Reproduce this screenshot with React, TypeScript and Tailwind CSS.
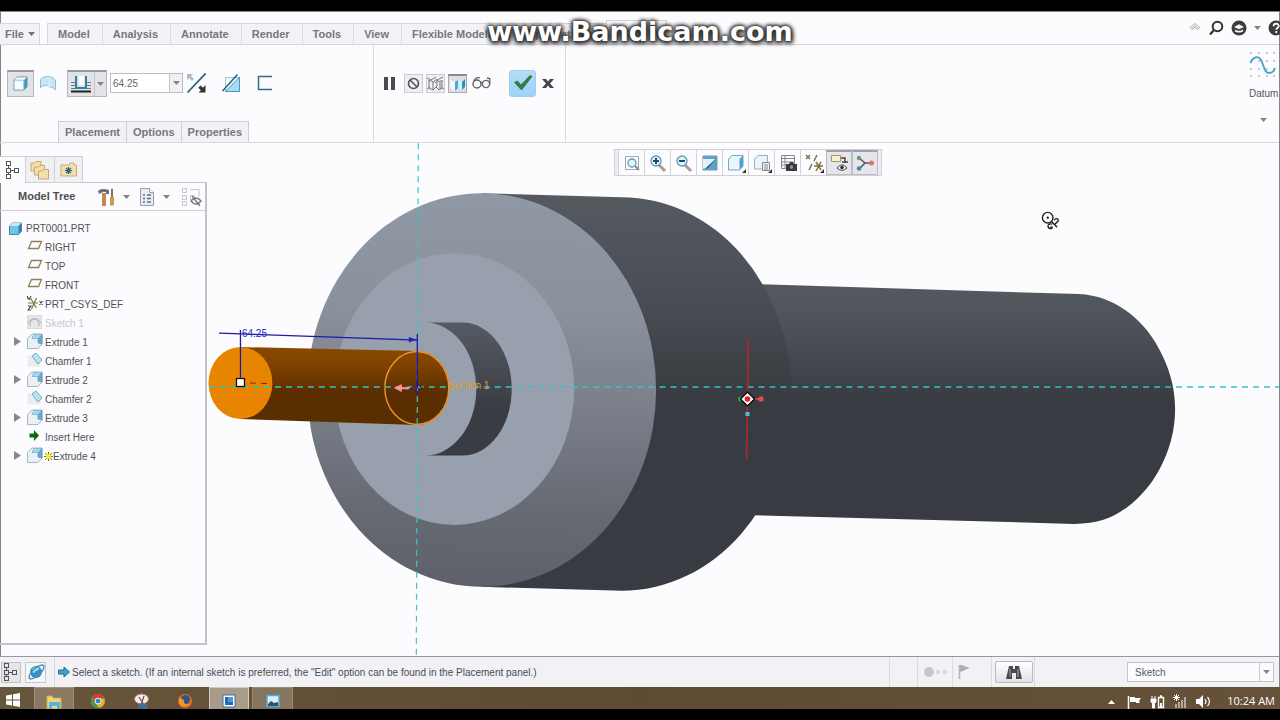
import type { ReactNode } from "react";

const ribbonTabs = ["Model", "Analysis", "Annotate", "Render", "Tools", "View", "Flexible Modeling", "Applications"];

function Caret({ className = "text-[#858585]" }: { className?: string }) {
  return (
    <svg viewBox="0 0 7 4" className={`h-1 w-[7px] shrink-0 ${className}`} fill="currentColor" aria-hidden="true">
      <path d="M0 0h7L3.500 4z" />
    </svg>
  );
}

function Icon({ size = 16, children }: { size?: number; children: ReactNode }) {
  return (
    <svg width={size} height={size} viewBox={`0 0 ${size} ${size}`} fill="none" className="shrink-0" aria-hidden="true">
      {children}
    </svg>
  );
}

function TreeGlyph() {
  return (
    <Icon size={18}>
      <g stroke="#555" strokeWidth="1">
        <rect x="2.500" y="0.500" width="4" height="4" />
        <rect x="2.500" y="7.500" width="4" height="4" />
        <rect x="2.500" y="13.500" width="4" height="4" />
        <rect x="10.500" y="7.500" width="4" height="4" />
        <path d="M4.500 4.500v3M4.500 11.500v2M6.500 9.500h4" />
      </g>
    </Icon>
  );
}

function Cube({ size = 16 }: { size?: number }) {
  return (
    <svg width={size} height={size} viewBox="0 0 16 16" className="shrink-0" aria-hidden="true">
      <path d="M1 4.500 4.500 1H15v10.500L11.500 15H1z" fill="#f6fcff" stroke="#6c9bb5" />
      <path d="M11.500 4.500 15 1v10.500L11.500 15z" fill="#3c9cc6" />
      <path d="M1 4.500h10.500V15" fill="none" stroke="#8fc0d8" />
    </svg>
  );
}

/* ---------- ribbon ---------- */

function TitleTabs() {
  return (
    <div className="flex h-[33px] items-end border-b border-[#d4d4da]">
      <button className="flex h-[21px] w-10 items-center gap-1 border border-b-0 border-l-0 border-[#d6d6dc] bg-[#f3f3f7] pl-[5px] text-[11px] font-bold text-[#77777c]">
        File <Caret className="text-[#6f6f74]" />
      </button>
      <nav className="ml-[7px] flex h-[21px] border-l border-t border-[#d6d6dc] bg-[#f3f3f7]">
        {ribbonTabs.map((t) => (
          <button key={t} className="border-r border-[#dcdce2] pr-3 pl-[10px] text-[11px] font-bold whitespace-nowrap text-[#77777c]">
            {t}
          </button>
        ))}
      </nav>
      <button className="h-6 border border-b-0 border-[#d0d0d6] bg-[#fcfbfe] px-[9px] text-[11px] font-bold text-[#77777c]">
        Extrude
      </button>
      <div className="ml-auto flex h-[33px] shrink-0 items-center gap-[7px]">
        <button aria-label="Minimize ribbon">
          <Icon size={12}>
            <path d="m1 5.500 5-4 5 4-1.500 1L6 4 2.500 6.500zM2.500 8 6 5.500 9.500 8" stroke="#b4b4b8" />
          </Icon>
        </button>
        <button aria-label="Search">
          <Icon>
            <circle cx="9.500" cy="6.500" r="4.800" stroke="#333" strokeWidth="2" />
            <path d="m6 10-4 4.500" stroke="#333" strokeWidth="2.200" />
          </Icon>
        </button>
        <button aria-label="Learning connector">
          <Icon>
            <circle cx="8" cy="8" r="7.500" fill="#3c3c3e" />
            <path d="m3 7 5-2.800L13 7 8 9.200z" fill="#f4f4f4" />
            <path d="M4 9.500c2 1.800 6 1.800 8 0v2c-2 1.300-6 1.300-8 0z" fill="#f4f4f4" />
          </Icon>
        </button>
        <Caret />
        <button aria-label="Help" className="-mr-[5px]">
          <Icon>
            <circle cx="8" cy="8" r="7.500" fill="#3c3c3e" />
            <path d="M5.500 6.200c0-3.700 5.500-3.200 5.200 0-.2 1.700-2.400 1.600-2.400 3.600M8.300 11v2" stroke="#fff" strokeWidth="1.800" />
          </Icon>
        </button>
      </div>
    </div>
  );
}

function FeatureControls() {
  return (
    <div className="flex h-7 items-center">
      <button aria-label="Extrude as solid" className="ml-[7px] grid h-[27px] w-[27px] place-items-center border border-t-2 border-[#b5b5ba] border-t-[#98989c] bg-[#e2e2e7]">
        <Cube size={15} />
      </button>
      <button aria-label="Extrude as surface" className="ml-[6px]">
        <Icon>
          <path d="M.5 4.500C4 .5 11 .5 15.500 5v10c-2-2.500-4-3-6-3C8 9.500 3.500 9.500.5 13z" fill="#c4e6f5" stroke="#9cb7c6" />
          <path d="M9.500 2.500V12" stroke="#d6effa" strokeWidth="2" />
        </Icon>
      </button>
      <div className="ml-[11px] flex h-[27px] border border-t-2 border-[#b5b5ba] border-t-[#98989c] bg-[#e2e2e7]">
        <button aria-label="Blind depth" className="grid w-[26px] place-items-center">
          <Icon size={20}>
            <path d="M0 8.500h6M0 11.500h6M0 14.500h6M14 8.500h6M14 11.500h6M14 14.500h6" stroke="#77777b" />
            <path d="M5 2v12h10V2" stroke="#2f7fa8" strokeWidth="2" />
            <path d="M8 2v9h5V2" fill="#fff" />
            <path d="M0 17.500h20" stroke="#222" strokeWidth="2" />
          </Icon>
        </button>
        <button aria-label="Depth options" className="grid w-3 place-items-center border-l border-[#c5c5ca]">
          <Caret />
        </button>
      </div>
      <div className="ml-[3px] flex h-5 w-[73px] border border-[#bcbcc2] bg-white">
        <input aria-label="Depth value" defaultValue="64.25" className="w-0 min-w-0 flex-1 bg-transparent pl-[2px] text-[10px] text-[#66666b] outline-none" />
        <button aria-label="Recent depths" className="grid w-[13px] place-items-center border-l border-[#c5c5ca] bg-[#f1f1f5]">
          <Caret />
        </button>
      </div>
      <button aria-label="Flip direction" className="ml-[3px]">
        <Icon size={20}>
          <path d="M1.500 19.500 19.500.5" stroke="#28627f" strokeWidth="1.700" />
          <path d="M1 7V1h6L5 3l3 3-2 2-3-3z" fill="#b9b9bd" />
          <path d="M19.500 12v7.500h-7l2.300-2.300-2.500-2.500 2.200-2.200 2.500 2.300z" fill="#33313a" />
        </Icon>
      </button>
      <button aria-label="Remove material" className="ml-4">
        <Icon size={18}>
          <path d="M3.500 3.500h14v14h-14z" fill="#f5fafd" stroke="#9cc4d8" />
          <path d="M17.500 3v14.500h-14z" fill="#a0def8" stroke="#4c94b5" />
          <path d="M.5 17 15.500.5" stroke="#2c5a73" strokeWidth="1.500" />
        </Icon>
      </button>
      <button aria-label="Thicken sketch" className="ml-[17px]">
        <Icon>
          <path d="M15 1.500H1.500v13H15" stroke="#39697f" strokeWidth="1.500" />
        </Icon>
      </button>
    </div>
  );
}

function DashboardControls() {
  const box = "grid h-[19px] w-[19px] place-items-center border border-[#cbcbd0] bg-[#efeff3]";
  return (
    <div className="mt-6 flex h-7 items-center pl-[10px]">
      <button aria-label="Pause" className="flex gap-[3px]">
        <span className="h-[13px] w-1 bg-[#4b4b4f]" />
        <span className="h-[13px] w-1 bg-[#4b4b4f]" />
      </button>
      <button aria-label="No preview" className={`ml-[9px] ${box}`}>
        <Icon size={13}>
          <circle cx="6.500" cy="6.500" r="5" stroke="#555" strokeWidth="1.600" />
          <path d="m3 3 7 7" stroke="#555" strokeWidth="1.600" />
        </Icon>
      </button>
      <button aria-label="Unattached preview" className={`ml-[3px] ${box}`}>
        <Icon size={17}>
          <path d="m0 3 4 2 5-3M2 5v8l4 2 4-4V4L6 7 2 5M6 7v8M8 8l4-4 4-2M10 5l3 2 2-2v8l-3 2-3-3M13 7v7M0 14l3-2M15 13l2 1" stroke="#77777a" />
        </Icon>
      </button>
      <button aria-label="Attached preview" className="ml-[3px] grid h-[19px] w-[19px] place-items-center border border-t-2 border-[#a9a9ae] border-t-[#88888c] bg-[#dedee3]">
        <Icon size={17}>
          <path d="m1 4 5 2v9l-5-3z" fill="#eefaff" />
          <path d="m6 6 3-2v8l-3 3z" fill="#48a8d8" />
          <path d="m9 4 4 2v8l-4-2z" fill="#d5effd" />
          <path d="m13 6 3-3v8l-3 3z" fill="#2e8fc4" />
        </Icon>
      </button>
      <button aria-label="Verify" className="ml-[5px]">
        <Icon size={19}>
          <circle cx="5" cy="10" r="4" stroke="#626266" strokeWidth="1.400" />
          <circle cx="14" cy="10" r="3.600" stroke="#626266" strokeWidth="1.400" />
          <path d="M8.500 9c.5-1 1.500-1 2 0M1.500 8C3 4 5 3 8 4M17.800 10V4.500L15 4" stroke="#626266" strokeWidth="1.300" />
        </Icon>
      </button>
      <button aria-label="Accept" className="ml-[18px] grid h-[27px] w-[27px] place-items-center rounded-[3px] border border-[#9fcdef] bg-linear-to-b from-[#b5dcf8] to-[#9fd2f9]">
        <Icon size={20}>
          <path d="m1.500 9.500 3-1.500 3.500 4L17 2.500l2 1L8.500 17z" fill="#2d8240" stroke="#236b35" strokeWidth=".7" />
        </Icon>
      </button>
      <button aria-label="Cancel" className="ml-[6px]">
        <Icon size={12}>
          <path d="M0 2h4l2 2.500L8 2h4L8 6.500l4 4.500H8L6 8.500 4 11H0l4-4.500z" fill="#454549" />
        </Icon>
      </button>
    </div>
  );
}

function Ribbon() {
  return (
    <div className="flex h-[98px] border-b border-[#d9dadd]">
      <section className="flex w-[374px] shrink-0 flex-col justify-between border-r border-[#dddde1] pt-6">
        <FeatureControls />
        <div className="ml-[58px] flex">
          {["Placement", "Options", "Properties"].map((t) => (
            <button key={t} className="-mr-px h-[21px] border border-b-0 border-[#cdcdd2] bg-[#f2f2f6] px-[6px] text-[11px] font-bold text-[#77777c]">
              {t}
            </button>
          ))}
        </div>
      </section>
      <section className="w-[192px] shrink-0 border-r border-[#dddde1]">
        <DashboardControls />
      </section>
      <button className="ml-auto flex w-[30px] flex-col items-start pt-[6px] text-[10px] text-[#55555a]">
        <Icon size={27}>
          <g fill="#8e8e92">
            {[2, 10, 18, 25].map((x) => [2, 10, 18, 25].map((y) => <circle key={`${x}-${y}`} cx={x} cy={y} r=".8" />))}
          </g>
          <path d="M1.500 12C4 6 9 4 12 9s3 13 8 13c3 0 5-2 6-5" stroke="#4ba4ce" strokeWidth="1.900" />
        </Icon>
        <span className="mt-2 leading-4">Datum</span>
        <Caret className="mt-4 ml-[11px] text-[#858585]" />
      </button>
    </div>
  );
}

/* ---------- model tree ---------- */

function Plane() {
  return (
    <Icon>
      <path d="M1.500 10.500 4.500 3.500h10l-3 7z" stroke="#8f8057" strokeWidth="1.300" />
    </Icon>
  );
}

function Csys() {
  return (
    <Icon>
      <path d="M1 8h10M3.500 3l6 10M9.500 3l-5 11" stroke="#86763c" strokeWidth="1.200" />
      <path d="M.5 1v2l1.500 1M4 1 2 5M1 11h3L1 15h3M12.500 6l3 4M15.500 6l-3 4" stroke="#444" strokeWidth="1.100" />
    </Icon>
  );
}

function SketchIcon() {
  return (
    <Icon>
      <rect x=".5" y="1.500" width="14" height="13" fill="#e6e6e8" stroke="#dadadc" />
      <path d="M3 12C3 3 12 3 12 12M1 9c4-6 9-6 13 0" stroke="#bbb" strokeWidth="1.200" />
    </Icon>
  );
}

function ExtrudeIcon() {
  return (
    <Icon>
      <path d="M.5 5.500 5 1h10v10l-4 4.500H.5z" fill="#eaf1f6" stroke="#aab6bf" />
      <path d="m5 5.500 2-4h8v9.500l-4-1V5.500z" fill="#67acd2" stroke="#5b94b3" strokeWidth=".7" />
      <path d="m5 5.500 2-4h7.500L11 5.500z" fill="#a5d7ef" />
    </Icon>
  );
}

function ChamferIcon() {
  return (
    <Icon>
      <path d="M.5 3.500h7l6 6v5H.5z" fill="#ececef" />
      <path d="m5 4 4-3 6 7-4 4z" fill="#b9e4f8" stroke="#6ba9c8" />
    </Icon>
  );
}

function InsertIcon() {
  return (
    <Icon>
      <path d="M2.500 5.500h4.500v-3.500l5 5.500-5 5.500V9.500H2.500z" fill="#116611" />
    </Icon>
  );
}

const treeRows: { label: string; icon: ReactNode; open?: boolean; muted?: boolean; fresh?: boolean }[] = [
  { label: "RIGHT", icon: <Plane /> },
  { label: "TOP", icon: <Plane /> },
  { label: "FRONT", icon: <Plane /> },
  { label: "PRT_CSYS_DEF", icon: <Csys /> },
  { label: "Sketch 1", icon: <SketchIcon />, muted: true },
  { label: "Extrude 1", icon: <ExtrudeIcon />, open: true },
  { label: "Chamfer 1", icon: <ChamferIcon /> },
  { label: "Extrude 2", icon: <ExtrudeIcon />, open: true },
  { label: "Chamfer 2", icon: <ChamferIcon /> },
  { label: "Extrude 3", icon: <ExtrudeIcon />, open: true },
  { label: "Insert Here", icon: <InsertIcon /> },
  { label: "Extrude 4", icon: <ExtrudeIcon />, open: true, fresh: true },
];

function ModelTree() {
  return (
    <aside className="flex w-[207px] shrink-0 flex-col pt-[13px] pb-[11px]">
      <div className="relative z-10 -mb-px flex h-[27px]">
        <button aria-label="Model tree" className="grid w-[26px] place-items-center border-r border-t border-[#d0d0d5] bg-[#fcfbfe]">
          <TreeGlyph />
        </button>
        <button aria-label="Folder browser" className="grid w-[29px] place-items-center border border-l-0 border-[#d0d0d5] bg-[#f0f0f4]">
          <Icon size={20}>
            <g fill="#f3dfae" stroke="#c9a869">
              <path d="M1 3h4l1-1.500h5V11H1z" />
              <path d="M4.500 7h4l1-1.500h5V15h-10z" />
              <path d="M8.500 11h4l1-1.500h5V19h-10z" />
            </g>
          </Icon>
        </button>
        <button aria-label="Favorites" className="grid w-7 place-items-center border border-l-0 border-[#d0d0d5] bg-[#f0f0f4]">
          <Icon size={17}>
            <path d="M1 4h8l1-2h4v2h2.500v11H1z" fill="#f3dfae" stroke="#c9ad72" />
            <path d="M8.500 6v7M5 9.500h7M6 7l5 5M11 7l-5 5" stroke="#28657a" strokeWidth="1.200" />
          </Icon>
        </button>
      </div>
      <div className="flex flex-1 flex-col border-t border-r-2 border-b-2 border-[#c2c2c7]">
        <header className="flex h-[28px] shrink-0 items-center border-b border-[#cfcfd4] pl-[18px]">
          <h2 className="text-[11px] font-bold whitespace-nowrap text-[#4e4e54]">Model Tree</h2>
          <button aria-label="Settings" className="ml-[22px] flex items-center gap-2">
            <Icon size={18}>
              <path d="M1 3c3-3 7-2 11-1v4H9V4H6L2 6z" fill="#6d6f75" />
              <path d="M5 5h4v13H5z" fill="#bd8d50" />
              <path d="M14.500 1h1v8h-1z" fill="#777" stroke="#777" />
              <path d="M13 9h4v8l-2 1-2-1z" fill="#d19a52" />
            </Icon>
            <Caret />
          </button>
          <button aria-label="Show" className="ml-2 flex items-center gap-[7px]">
            <Icon size={18}>
              <path d="M2.500.5h9l4 4v13h-13z" fill="#e9edf2" stroke="#9a9ea6" />
              <path d="M11.500.5v4h4" fill="#fff" stroke="#9a9ea6" />
              <path d="M5 7h2M9 7h4M5 10.500h2M9 10.500h4M5 14h2M9 14h4" stroke="#54749a" strokeWidth="1.500" />
            </Icon>
            <Caret />
          </button>
          <button aria-label="Tree filters" className="ml-3">
            <Icon size={20}>
              <g stroke="#c6c6ca">
                <path d="M.5 1.500h4v4h-4zM.5 8.500h4v4h-4zM.5 14.500h4v4h-4zM8.500 8.500h4v4h-4zM8 2.500h9v7" />
              </g>
              <path d="M9 14c3-4 7-4 10 0-3 4-7 4-10 0zM10 9l8 10" stroke="#77777b" strokeWidth="1.300" />
            </Icon>
          </button>
        </header>
        <ul className="pt-2 text-[10px] text-[#515156]">
          <li className="flex h-[19px] items-center gap-1 pl-[9px]">
            <svg width="13" height="13" viewBox="0 0 13 13" aria-hidden="true">
              <path d="M.5 4 3.500 1h9v8l-3 3.500h-9z" fill="#72c3e8" stroke="#4489a9" />
              <path d="M.5 4 3.500 1h9l-3 3z" fill="#c1e9f9" />
              <path d="m9.500 4 3-3v8l-3 3.500z" fill="#2e85ae" />
            </svg>
            PRT0001.PRT
          </li>
          {treeRows.map((r) => (
            <li key={r.label} className={r.muted ? "flex h-[19px] items-center pl-[14px] text-[#c6c6ca]" : "flex h-[19px] items-center pl-[14px]"}>
              <span className="w-[13px] pb-[3px]">
                {r.open && (
                  <button aria-label={`Expand ${r.label}`} className="block">
                    <svg width="7" height="9" viewBox="0 0 7 9" fill="#88888c" aria-hidden="true">
                      <path d="M0 0v9l7-4.500z" />
                    </svg>
                  </button>
                )}
              </span>
              <span className="pb-[3px]">{r.icon}</span>
              {r.fresh && (
                <svg width="9" height="9" viewBox="0 0 9 9" className="ml-[1px]" aria-hidden="true">
                  <path d="M4.500 0v9M0 4.500h9M1 1l7 7M8 1 1 8" stroke="#77761c" />
                  <circle cx="4.500" cy="4.500" r="2.500" fill="#f4f01d" />
                </svg>
              )}
              <span className={r.fresh ? "" : "pl-[2px]"}>{r.label}</span>
            </li>
          ))}
        </ul>
      </div>
    </aside>
  );
}

/* ---------- graphics area ---------- */

const Corner = () => <path d="M20 16v4h-4z" fill="#333" />;

const Lens = ({ sign }: { sign: string }) => (
  <>
    <path d="m11 12 6 6" stroke="#a5a097" strokeWidth="3" />
    <circle cx="8" cy="8" r="5" fill="#e3f4fb" stroke="#5e9ab8" strokeWidth="1.300" />
    <path d={sign} stroke="#164f6d" strokeWidth="2" />
  </>
);

const viewTools: { name: string; on?: boolean; icon: ReactNode }[] = [
  {
    name: "Refit",
    icon: (
      <>
        <path d="M3.500 3.500h13v13h-13z" stroke="#a0a5aa" />
        <circle cx="10" cy="10" r="4" fill="#e3f4fb" stroke="#5e9ab8" strokeWidth="1.300" />
        <path d="m13 13 4 4" stroke="#8d8a85" strokeWidth="2" />
      </>
    ),
  },
  { name: "Zoom in", icon: <Lens sign="M5 8h6M8 5v6" /> },
  { name: "Zoom out", icon: <Lens sign="M5 8h6" /> },
  {
    name: "Repaint",
    icon: (
      <>
        <path d="M3 3h14v14H3z" fill="#5ba3ca" stroke="#7c98a8" />
        <path d="M3 6h12L6 15l-3 1z" fill="#e1f2fa" />
        <path d="M16 6 8 15l-3 1z" fill="#214f6b" />
      </>
    ),
  },
  {
    name: "Display style",
    icon: (
      <>
        <path d="M2.500 6 6 2.500h11V13l-3.500 4h-11z" fill="#e8f6fc" stroke="#7aa5bc" />
        <path d="M13.500 6 17 2.500V13l-3.500 4z" fill="#4ba1c9" />
        <Corner />
      </>
    ),
  },
  {
    name: "Saved orientations",
    icon: (
      <>
        <path d="M2.500 6 6 2.500h9.500V14l-2 2h-11z" fill="#e8f6fc" stroke="#8fb4c7" />
        <path d="M10.500 9.500h7v8h-7z" fill="#f2f2f2" stroke="#88898c" />
        <path d="M12 12h4M12 14h4M12 16h4" stroke="#888" />
        <Corner />
      </>
    ),
  },
  {
    name: "View manager",
    icon: (
      <>
        <path d="M3.500 2.500h13v13h-13zM3.500 5.500h13M3.500 9h13M3.500 12h13M7 3v12" stroke="#88898c" />
        <path d="M8 11h3l1-2h3l1 2h3v7H8z" fill="#3c3c40" />
        <circle cx="13.500" cy="14" r="2.500" fill="#8b8b90" stroke="#222" />
      </>
    ),
  },
  {
    name: "Datum display",
    icon: (
      <>
        <path d="m2 2 4 4M6 2 2 6M13 2l-3 6M8 11l-3 6M10 13h9M12 9l5 8M17 9l-5 9" stroke="#80713b" strokeWidth="1.500" />
        <Corner />
      </>
    ),
  },
  {
    name: "Annotation display",
    on: true,
    icon: (
      <>
        <path d="M2.500 2.500h9v6h-9z" fill="#f8f0cf" stroke="#a69658" />
        <path d="M12 5h4v5M13 9h6" stroke="#444" strokeWidth="1.400" />
        <path d="M8 15c3-4 7-4 10 0-3 3-7 3-10 0z" fill="#eee" stroke="#444" />
        <circle cx="13" cy="14.500" r="1.800" fill="#333" />
      </>
    ),
  },
  {
    name: "Spin center",
    on: true,
    icon: (
      <>
        <path d="m4 5 6 5-5 5M10 10h7" stroke="#55555a" strokeWidth="1.600" />
        <circle cx="4" cy="5" r="2.200" fill="#659f63" />
        <circle cx="4" cy="15.500" r="2.300" fill="#418fac" />
        <circle cx="16.500" cy="10" r="2.500" fill="#d77676" />
      </>
    ),
  },
];

function Model() {
  return (
    <svg viewBox="207 143 1073 513" className="absolute inset-0 h-full w-full" role="img" aria-label="Extruded shaft model">
      <defs>
        <linearGradient id="shaft" gradientUnits="userSpaceOnUse" x1="0" y1="284" x2="0" y2="400">
          <stop offset="0" stopColor="#545960" />
          <stop offset=".35" stopColor="#4e535b" />
          <stop offset="1" stopColor="#393b42" />
        </linearGradient>
        <linearGradient id="drum" gradientUnits="userSpaceOnUse" x1="0" y1="193" x2="0" y2="400">
          <stop offset="0" stopColor="#555a61" />
          <stop offset=".45" stopColor="#4b5058" />
          <stop offset=".85" stopColor="#3d4045" />
          <stop offset="1" stopColor="#393b42" />
        </linearGradient>
        <linearGradient id="bevel" gradientUnits="userSpaceOnUse" x1="470" y1="193" x2="460" y2="587">
          <stop offset="0" stopColor="#8f98a4" />
          <stop offset=".3" stopColor="#8a919c" />
          <stop offset=".55" stopColor="#797e89" />
          <stop offset=".8" stopColor="#666a73" />
          <stop offset="1" stopColor="#5e616a" />
        </linearGradient>
        <linearGradient id="boss" gradientUnits="userSpaceOnUse" x1="0" y1="322" x2="0" y2="410">
          <stop offset="0" stopColor="#565b63" />
          <stop offset="1" stopColor="#3a3c43" />
        </linearGradient>
        <linearGradient id="rod" gradientUnits="userSpaceOnUse" x1="0" y1="346" x2="0" y2="424">
          <stop offset="0" stopColor="#8b4900" />
          <stop offset=".25" stopColor="#7e4200" />
          <stop offset=".6" stopColor="#5a2e00" />
          <stop offset="1" stopColor="#5a2f00" />
        </linearGradient>
      </defs>
      <path d="M740 283.500 1080 294C1098 295 1113 301 1126 310 1142 321 1155 337 1164 357 1172 374 1176 391 1176 409 1176 427 1172 445 1164 462 1155 482 1142 497 1127 508 1113 518 1098 524 1075 524L740 515z" fill="url(#shaft)" />
      <path d="M482 193 622 197A170 197 0 0 1 622 591L482 587z" fill="url(#drum)" />
      <ellipse cx="482" cy="390" rx="174.500" ry="197" fill="url(#bevel)" />
      <ellipse cx="454.500" cy="389" rx="120" ry="136" fill="#97a0ac" />
      <path d="M427 322.500H463A49 66.500 0 0 1 463 455.500H424A51 66.500 0 0 0 427 322.500z" fill="url(#boss)" />
      <path d="M240 347 417 351A32 36.500 0 0 1 417 425L240 419z" fill="url(#rod)" />
      <ellipse cx="417" cy="388" rx="32" ry="36.500" fill="none" stroke="#f5922b" strokeWidth="1.400" />
      <ellipse cx="240.500" cy="383" rx="32" ry="36" fill="#e88500" />
      <path d="M250 383 417 388" stroke="#a02000" strokeDasharray="6 5" />
      <path d="M209 387H1280" stroke="#2fc6c6" strokeDasharray="6 5" strokeWidth="1.600" />
      <path d="M418.500 143 416.500 656" stroke="#3cc6c6" strokeDasharray="6 5" strokeWidth="1.200" />
      <text x="448" y="389" fontSize="10" fill="#f0922c" fontFamily="Liberation Sans, sans-serif">Section 1</text>
      <path d="M219 333 418 340M240.500 330v52M417.500 334v54" stroke="#1b1ba8" strokeWidth="1.300" />
      <path d="m409 337 8 2.500-8 3z" fill="#2424bd" />
      <text x="242" y="337" fontSize="10" fill="#2424bd" fontFamily="Liberation Sans, sans-serif">64.25</text>
      <path d="m394 388 8-4v3l9 .5-3 2-6-.5v3z" fill="#ff91a4" />
      <path d="m411 388 6-4 6 4-6 4zM417 381v14" stroke="#33187c" fill="none" />
      <rect x="236.500" y="378.500" width="8" height="8" fill="#fff" stroke="#111" strokeWidth="1.300" />
      <path d="M749 339 747 459" stroke="#b3262a" strokeWidth="1.600" />
      <circle cx="741" cy="399" r="2.500" fill="#16b544" />
      <path d="M753 399h8" stroke="#e04545" strokeWidth="1.500" />
      <circle cx="761.500" cy="399" r="2.700" fill="#e64a4a" />
      <path d="m748 392 7 7-7 7-7-7z" fill="#fff" stroke="#111" strokeWidth="1.500" />
      <circle cx="748" cy="399" r="2.800" fill="#e2231f" />
      <rect x="746" y="412" width="4" height="4" fill="#58b8d8" />
      <g fill="none" stroke="#222" strokeWidth="1.400">
        <circle cx="1048.500" cy="217.500" r="5.300" />
        <path d="m1052 221 6 6M1055 220c1-2 4-2 4 0s-2 2-3 4M1053 224c-3-1-5 1-4 3s4 2 4 0h-2" />
      </g>
      <circle cx="1048.500" cy="217.500" r="1.200" fill="#222" />
    </svg>
  );
}

function Viewport() {
  return (
    <main className="relative flex min-w-0 flex-1 items-start justify-center pt-[6px] pl-[10px]">
      <Model />
      <div role="toolbar" aria-label="Graphics view" className="relative flex h-[27px] border border-[#cfcfd5] bg-[#fcfbfe]">
        <span className="w-[3px] bg-[#ededf1]" />
        {viewTools.map((t) => (
          <button
            key={t.name}
            aria-label={t.name}
            className={
              t.on
                ? "grid w-[26px] place-items-center border border-t-2 border-[#bdbdc4] border-t-[#a0a0a8] bg-[#e5e5eb]"
                : "grid w-[26px] place-items-center border-l border-[#d3d3d9]"
            }
          >
            <Icon size={20}>{t.icon}</Icon>
          </button>
        ))}
        <span className="w-[3px] bg-[#ededf1]" />
      </div>
    </main>
  );
}

/* ---------- status bar and taskbar ---------- */

function StatusBar() {
  return (
    <footer className="flex h-[31px] shrink-0 items-center border-t border-[#98989d] bg-[#f1f1f6]">
      <button aria-label="Toggle navigator" className="ml-px grid h-[21px] w-5 place-items-center border border-[#c0c0c5] bg-[#e4e4e9]">
        <TreeGlyph />
      </button>
      <button aria-label="Toggle browser" className="ml-1 grid h-[21px] w-[21px] place-items-center border border-[#c6c6cc] bg-[#f7f7fa]">
        <Icon size={18}>
          <circle cx="9" cy="9" r="6" fill="#2e92c7" />
          <path d="M6 5c3-2 6-1 6 1s-3 1-4 3-3 0-3-1z" fill="#a7dcf2" />
          <path d="M3 16C-1 13 9 2 16 2c4 3-6 14-13 14z" stroke="#4a8fb5" strokeWidth="1.400" />
        </Icon>
      </button>
      <p className="ml-2 flex h-full items-center gap-[2px] border-l border-[#d6d6dc] pl-[3px] text-[10px] whitespace-nowrap text-[#4c4c52]">
        <Icon size={12}>
          <path d="M.5 4H6V1l5.500 5L6 11V8H.5z" fill="#3aa3ce" stroke="#2a6a88" />
        </Icon>
        Select a sketch. (If an internal sketch is preferred, the "Edit" option can be found in the Placement panel.)
      </p>
      <div className="ml-auto flex h-full shrink-0 items-center border-l border-[#dadae0] pl-[27px]">
        <span className="flex h-full w-[35px] items-center border-l border-[#dadae0] pl-[5px]">
          <svg width="25" height="12" viewBox="0 0 25 12" fill="#c6c6ca" aria-hidden="true">
            <circle cx="6" cy="6" r="5" />
            <circle cx="15" cy="6" r="2.200" fill="#d8d8dc" />
            <circle cx="22" cy="6" r="2.200" fill="#d8d8dc" />
          </svg>
        </span>
        <span className="flex h-full w-[39px] items-center border-l border-[#dadae0] pl-[5px]">
          <Icon>
            <path d="M1.500 1v14" stroke="#b6b6ba" strokeWidth="1.600" />
            <path d="M2 1c4 0 5 2 10 3-4 1-6 3-10 4z" fill="#adadb2" />
          </Icon>
        </span>
        <span className="flex h-full w-[44px] items-center border-x border-[#dadae0] pl-[3px]">
          <button aria-label="Find" className="grid h-[22px] w-[38px] place-items-center rounded-[2px] border border-[#b9b9be] bg-linear-to-b from-white to-[#e2e2e7]">
            <Icon>
              <path d="M3 2h4v3h2V2h4l3 13h-6V9H6v6H0z" fill="#4a4a4e" />
              <path d="M4 5v8M12 5v8" stroke="#a5a5aa" />
            </Icon>
          </button>
        </span>
        <div className="relative ml-[92px] mr-[5px] flex h-5 w-[147px] items-center border border-[#c3c3c9] bg-[#fcfcfe]">
          <select aria-label="Selection filter" className="h-full w-full appearance-none bg-transparent pl-[7px] text-[10px] text-[#5a5a60] outline-none">
            <option>Sketch</option>
          </select>
          <span className="pointer-events-none absolute inset-y-0 right-0 grid w-[14px] place-items-center border-l border-[#c9c9cf]">
            <Caret />
          </span>
        </div>
      </div>
    </footer>
  );
}

function Taskbar() {
  return (
    <div className="flex h-[22px] shrink-0 items-stretch overflow-hidden bg-linear-to-r from-[#67553c] via-[#5e4b31] to-[#665238]">
      <button aria-label="Start" className="ml-[5px] grid w-[15px] place-items-center pt-1">
        <Icon size={14}>
          <path d="m0 2.500 6-1v5H0zM7 1.300 14 0v6.500H7zM0 7.500h6v5l-6-1zM7 7.500h7V14l-7-1.200z" fill="#fff" />
        </Icon>
      </button>
      <button aria-label="File Explorer" className="ml-[14px] flex w-[40px] items-end justify-center border border-b-0 border-[#a0927c] bg-[#8a7a64]">
        <Icon>
          <path d="M1 3h5l1 2h8v11H1z" fill="#f2d477" stroke="#cfaa4c" />
          <path d="M3 9h11v7h-3v-3H6v3H3z" fill="#58b4dd" />
        </Icon>
      </button>
      <button aria-label="Chrome" className="ml-[16px] grid w-4 place-items-center pt-[5px]">
        <Icon size={14}>
          <circle cx="7" cy="7" r="7" fill="#e3b522" />
          <path d="M1 3.500A7 7 0 0 1 13.500 4.500H7L4 8z" fill="#d83b2d" />
          <path d="M1 3.500 4.500 9 8 14A7 7 0 0 1 1 3.500z" fill="#3b9d4b" />
          <circle cx="7" cy="7" r="3.300" fill="#fff" />
          <circle cx="7" cy="7" r="2.500" fill="#4281d6" />
        </Icon>
      </button>
      <button aria-label="Snipping Tool" className="ml-[28px] grid w-4 place-items-center pt-[5px]">
        <Icon>
          <ellipse cx="7.500" cy="6" rx="7" ry="5" fill="#f1eded" stroke="#c96a62" />
          <path d="m5 4 5 8M10 3 7 12" stroke="#5b5560" strokeWidth="1.200" />
          <circle cx="6.500" cy="13.500" r="1.800" stroke="#3a79a5" strokeWidth="1.500" />
          <circle cx="11" cy="13.500" r="1.800" stroke="#3a79a5" strokeWidth="1.500" />
        </Icon>
      </button>
      <button aria-label="Firefox" className="ml-[27px] grid w-4 place-items-center pt-[5px]">
        <Icon size={14}>
          <circle cx="7" cy="7" r="7" fill="#e5701a" />
          <circle cx="7.500" cy="5.500" r="4.500" fill="#27568f" />
          <path d="M1 4c2 0 3 1 5 2-1 3 1 5 5 4-3 4-9 3-10-2z" fill="#f1972b" />
        </Icon>
      </button>
      <button aria-label="Creo Parametric" className="ml-4 grid w-[40px] place-items-center border border-b-0 border-[#d3cabc] bg-[#a79b8a] pt-1">
        <Icon size={14}>
          <path d="M1 1h12v12H1z" fill="#fff" stroke="#3c6f9c" />
          <path d="M3 3h8v8H3z" fill="#1f6db0" />
          <path d="M6 3h5v5H6z" fill="#4d97d0" />
        </Icon>
      </button>
      <button aria-label="Photos" className="ml-[3px] grid w-[41px] place-items-center border border-b-0 border-[#9a8b75] bg-[#85755e] pt-1">
        <Icon size={14}>
          <path d="M1 1.500h12v11H1z" fill="#dceefa" stroke="#54aad8" strokeWidth="1.500" />
          <path d="m2 10 3-3 3 2 4-1v4H2z" fill="#31506a" />
        </Icon>
      </button>
      <div className="ml-auto flex shrink-0 items-center pt-[7px] pr-[5px] text-white">
        <button aria-label="Show hidden icons">
          <svg width="7" height="4" viewBox="0 0 7 4" fill="#fff" aria-hidden="true"><path d="M0 4h7L3.500 0z" /></svg>
        </button>
        <span className="ml-[12px] flex gap-2">
          <Icon size={15}>
            <path d="M1.500 2v13" stroke="#fff" strokeWidth="1.500" />
            <path d="M3 3h5v1h6l-2 3 1 2H9V8H3z" fill="#fff" />
          </Icon>
          <Icon size={15}>
            <path d="M1 5h5v3L4.500 9.500V14h-2V9.500L1 8zM2 2v3M5 2v3" fill="#fff" stroke="#fff" />
            <path d="M8.500 3.500h5v10h-5zM10 2h2" stroke="#fff" strokeWidth="1.400" />
            <path d="M10 9h2v4h-2z" fill="#fff" />
          </Icon>
          <Icon size={15}>
            <path d="M3.500 0v7M0 3.500h7M1 1l5 5M6 1 1 6" stroke="#fff" />
            <path d="M3 10v4M6 8v6M9 6v8M12 3v11" stroke="#bcb3a6" strokeWidth="1.800" />
          </Icon>
          <Icon size={15}>
            <path d="M0 5h3l4-4v13l-4-4H0z" fill="#fff" />
            <path d="M9 5c1.500 2 1.500 3 0 5M11.500 3c2.500 3 2.500 6 0 9" stroke="#fff" strokeWidth="1.200" />
          </Icon>
        </span>
        <time className="ml-[16px] font-['Open_Sans',sans-serif] text-[11px] whitespace-nowrap">10:24 AM</time>
      </div>
    </div>
  );
}

export default function App() {
  return (
    <div className="relative flex min-h-screen flex-col overflow-hidden bg-black py-[11px] font-['Liberation_Sans',Arial,sans-serif]">
      <div className="flex flex-1 flex-col border-t border-r border-[#85858a] bg-[#fcfbfe] shadow-[inset_1px_0_0_#85858a]">
        <TitleTabs />
        <Ribbon />
        <div className="flex flex-1">
          <ModelTree />
          <Viewport />
        </div>
        <StatusBar />
      </div>
      <Taskbar />
      <div className="pointer-events-none absolute inset-x-0 top-4 text-center font-['DejaVu_Sans',sans-serif] text-[27px] leading-8 font-bold text-white [text-shadow:0_0_2px_#333,0_0_4px_#333,0_0_5px_#333,2px_2px_5px_#333,-1px_1px_5px_#333]">
        www.Bandicam.com
      </div>
    </div>
  );
}
